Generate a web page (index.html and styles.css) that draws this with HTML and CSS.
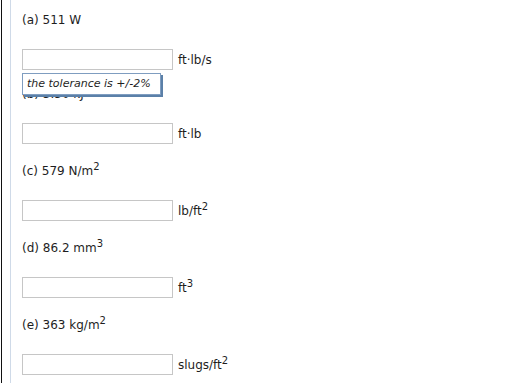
FILE: index.html
```html
<!DOCTYPE html>
<html lang="en">
<head>
  <meta charset="UTF-8" />
  <title>Unit conversion</title>
  <link rel="stylesheet" href="styles.css">
</head>
<body>

<div class="frame">
  <div class="sheet">

    <div class="part part-first">
      <div class="label">(a) 511 W</div>
      <div class="answer">
        <input type="text" class="box" />
        <span class="unit">ft&middot;lb/s</span>
      </div>
      <div class="tip">the tolerance is +/-2%</div>
    </div>

    <div class="part">
      <div class="label">(b) 3.50 kJ</div>
      <div class="answer">
        <input type="text" class="box" />
        <span class="unit">ft&middot;lb</span>
      </div>
    </div>

    <div class="part">
      <div class="label">(c) 579 N/m<sup>2</sup></div>
      <div class="answer">
        <input type="text" class="box" />
        <span class="unit">lb/ft<sup>2</sup></span>
      </div>
    </div>

    <div class="part">
      <div class="label">(d) 86.2 mm<sup>3</sup></div>
      <div class="answer">
        <input type="text" class="box" />
        <span class="unit">ft<sup>3</sup></span>
      </div>
    </div>

    <div class="part">
      <div class="label">(e) 363 kg/m<sup>2</sup></div>
      <div class="answer">
        <input type="text" class="box" />
        <span class="unit">slugs/ft<sup>2</sup></span>
      </div>
    </div>

  </div>
</div>

</body>
</html>
```

FILE: styles.css
```css
body {
  margin: 0;
  background-color: #fff;
  font-family: "DejaVu Sans", Verdana, sans-serif;
  font-size: 12px;
  color: #1e1e1e;
}

.frame {
  margin-left: 1px;
  border-left: 1px solid #111;
  min-height: 383px;
  padding-left: 8px;
}

.sheet {
  border-left: 1px solid #cfdae8;
  min-height: 383px;
  padding: 12px 0 0 11px;
}

.part {
  position: relative;
  margin-bottom: 19px;
}

.part-first {
  z-index: 2;
  margin-bottom: 16px;
}

.label {
  line-height: 16px;
  height: 16px;
}

.answer {
  display: flex;
  align-items: baseline;
  margin-top: 21px;
}

.box {
  box-sizing: border-box;
  width: 151px;
  height: 21px;
  margin: 0;
  padding: 2px 4px;
  border: 1px solid #c6c6c6;
  font-family: inherit;
  font-size: 12px;
}

.unit {
  margin-left: 5px;
  line-height: 16px;
}

sup {
  font-size: 10px;
  line-height: 0;
  vertical-align: 5px;
}

.tip {
  position: absolute;
  left: 0;
  top: 61px;
  box-sizing: border-box;
  width: 139px;
  height: 22px;
  padding-left: 4px;
  border: 1px solid #7f9dc0;
  box-shadow: 2px 2px 0 #5b80a8;
  background-color: #fff;
  font-size: 11px;
  font-style: italic;
  line-height: 20px;
  white-space: nowrap;
}
```
